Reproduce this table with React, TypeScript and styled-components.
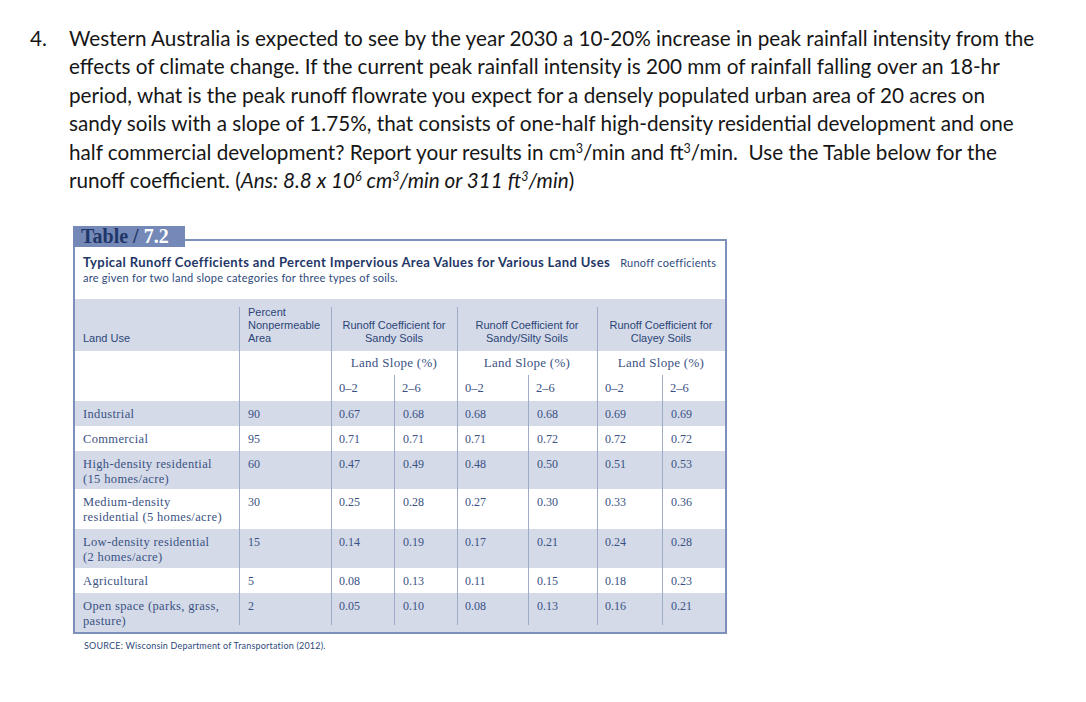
import styled, { createGlobalStyle } from "styled-components";

const GlobalStyle = createGlobalStyle`
  html, body {
    margin: 0;
    padding: 0;
    background: #ffffff;
  }
  body {
    width: 1086px;
    height: 702px;
    overflow: hidden;
  }
`;

const Page = styled.div`
  padding: 24px 0 0 30px;
`;

const Question = styled.div`
  display: flex;
  font-family: Lato, "Liberation Sans", sans-serif;
  font-size: 20.7px;
  line-height: 28.4px;
  color: #161616;

  sup {
    font-size: 12.5px;
    line-height: 0;
    vertical-align: 7px;
  }
`;

const Num = styled.div`
  width: 39px;
  flex: none;
`;

const Line = styled.div`
  white-space: pre;
`;

const Frame = styled.div`
  position: relative;
  width: 654px;
  box-sizing: border-box;
  margin: 45px 0 0 43px;
  border: 2px solid #7d8fbb;
  background: #ffffff;
`;

const Tab = styled.div`
  position: absolute;
  top: -15px;
  left: -2px;
  width: 112px;
  height: 21px;
  box-sizing: border-box;
  padding-left: 8px;
  background: #7489b7;
  font-family: "Liberation Serif", serif;
  font-weight: 700;
  font-size: 20px;
  line-height: 21px;
  color: #1f3668;

  span {
    color: #ffffff;
  }
`;

const Caption = styled.div`
  padding: 14px 0 14px 8px;
  font-family: Lato, "Liberation Sans", sans-serif;
  font-size: 11px;
  color: #1f3666;
`;

const CaptionLine = styled.div`
  height: 15px;
  line-height: 15px;
  white-space: nowrap;
`;

const CaptionTitle = styled.span`
  font-weight: 700;
  font-size: 13px;
  letter-spacing: 0.4px;
  margin-right: 10px;
`;

const CaptionNote = styled.span`
  font-size: 11px;
  letter-spacing: 0.25px;
  color: #2e4a7c;
`;

const Grid = styled.table`
  border-collapse: collapse;
  table-layout: fixed;
  width: 650px;
`;

const Row = styled.tr<{ $shade?: boolean; $h: number }>`
  height: ${(p) => p.$h}px;
  background: ${(p) => (p.$shade ? "#d4dae8" : "#ffffff")};
`;

const Cell = styled.td<{ $rule?: boolean; $top?: number; $bottom?: number; $pad?: number }>`
  position: relative;
  padding: 0 0 0 ${(p) => p.$pad ?? 9}px;
  vertical-align: top;
  font-family: "Liberation Serif", serif;
  font-size: 12px;
  line-height: 14.5px;
  color: #3a5283;

  &::before {
    content: "";
    display: ${(p) => (p.$rule ? "block" : "none")};
    position: absolute;
    left: 0;
    top: ${(p) => p.$top ?? 0}px;
    bottom: ${(p) => p.$bottom ?? 0}px;
    border-left: 1px solid #9eabc9;
  }
`;

const BodyCell = styled(Cell)`
  padding-top: 6px;
`;

const UseCell = styled(BodyCell)`
  font-size: 12.5px;
  letter-spacing: 0.35px;
`;

const HeadCell = styled(Cell)<{ $center?: boolean }>`
  vertical-align: bottom;
  padding-bottom: 6px;
  padding-right: 2px;
  text-align: ${(p) => (p.$center ? "center" : "left")};
  font-family: "Liberation Sans", Arial, sans-serif;
  font-size: 11px;
  line-height: 13px;
  color: #2c4577;
`;

const SlopeCell = styled(Cell)`
  vertical-align: middle;
  text-align: center;
  padding-left: 0;
  font-size: 13px;
  letter-spacing: 0.3px;
`;

const RangeCell = styled(Cell)`
  vertical-align: middle;
  font-size: 12.5px;
`;

const Source = styled.div`
  margin: 6px 0 0 54px;
  font-family: Lato, "Liberation Sans", sans-serif;
  font-size: 9px;
  line-height: 12px;
  letter-spacing: 0.2px;
  color: #2e4a7c;
`;

type DataRow = {
  use: string[];
  pct: string;
  values: string[];
  h: number;
  shade: boolean;
};

const rows: DataRow[] = [
  { use: ["Industrial"], pct: "90", values: ["0.67", "0.68", "0.68", "0.68", "0.69", "0.69"], h: 25, shade: true },
  { use: ["Commercial"], pct: "95", values: ["0.71", "0.71", "0.71", "0.72", "0.72", "0.72"], h: 25, shade: false },
  { use: ["High-density residential", "(15 homes/acre)"], pct: "60", values: ["0.47", "0.49", "0.48", "0.50", "0.51", "0.53"], h: 38, shade: true },
  { use: ["Medium-density", "residential (5 homes/acre)"], pct: "30", values: ["0.25", "0.28", "0.27", "0.30", "0.33", "0.36"], h: 40, shade: false },
  { use: ["Low-density residential", "(2 homes/acre)"], pct: "15", values: ["0.14", "0.19", "0.17", "0.21", "0.24", "0.28"], h: 39, shade: true },
  { use: ["Agricultural"], pct: "5", values: ["0.08", "0.13", "0.11", "0.15", "0.18", "0.23"], h: 25, shade: false },
  { use: ["Open space (parks, grass,", "pasture)"], pct: "2", values: ["0.05", "0.10", "0.08", "0.13", "0.16", "0.21"], h: 39, shade: true },
];

const widths = [164, 92, 63, 63, 71, 69, 65, 63];
const groups = ["Sandy Soils", "Sandy/Silty Soils", "Clayey Soils"];

export default function App() {
  return (
    <>
      <GlobalStyle />
      <Page>
        <Question>
          <Num>4.</Num>
          <div>
            <Line>Western Australia is expected to see by the year 2030 a 10-20% increase in peak rainfall intensity from the</Line>
            <Line>effects of climate change. If the current peak rainfall intensity is 200 mm of rainfall falling over an 18-hr</Line>
            <Line>period, what is the peak runoff flowrate you expect for a densely populated urban area of 20 acres on</Line>
            <Line>sandy soils with a slope of 1.75%, that consists of one-half high-density residential development and one</Line>
            <Line>
              half commercial development? Report your results in cm<sup>3</sup>/min and ft<sup>3</sup>/min.  Use the Table below for the
            </Line>
            <Line>
              runoff coefficient. (
              <i>
                Ans: 8.8 x 10<sup>6</sup> cm<sup>3</sup>/min or 311 ft<sup>3</sup>/min
              </i>
              )
            </Line>
          </div>
        </Question>

        <Frame>
          <Tab>
            Table / <span>7.2</span>
          </Tab>
          <Caption>
            <CaptionLine>
              <CaptionTitle>
                Typical Runoff Coefficients and Percent Impervious Area Values for Various Land Uses
              </CaptionTitle>
              <CaptionNote>Runoff coefficients</CaptionNote>
            </CaptionLine>
            <CaptionLine>
              <CaptionNote>are given for two land slope categories for three types of soils.</CaptionNote>
            </CaptionLine>
          </Caption>

          <Grid>
            <colgroup>
              {widths.map((w, i) => (
                <col key={i} style={{ width: w }} />
              ))}
            </colgroup>
            <tbody>
              <Row $shade $h={52}>
                <HeadCell $pad={8}>Land Use</HeadCell>
                <HeadCell $rule $top={8}>
                  Percent
                  <br />
                  Nonpermeable
                  <br />
                  Area
                </HeadCell>
                {groups.map((g) => (
                  <HeadCell key={g} colSpan={2} $center $rule $top={8} $pad={2}>
                    Runoff Coefficient for
                    <br />
                    {g}
                  </HeadCell>
                ))}
              </Row>
              <Row $h={24}>
                <Cell rowSpan={2} />
                <Cell rowSpan={2} $rule />
                {groups.map((g) => (
                  <SlopeCell key={g} colSpan={2} $rule>
                    Land Slope (%)
                  </SlopeCell>
                ))}
              </Row>
              <Row $h={26}>
                {groups.map((g) => [
                  <RangeCell key={g + "a"} $rule $pad={8}>
                    0–2
                  </RangeCell>,
                  <RangeCell key={g + "b"} $rule $pad={8}>
                    2–6
                  </RangeCell>,
                ])}
              </Row>
              {rows.map((r, i) => {
                const last = i === rows.length - 1;
                const bottom = last ? 7 : 0;
                return (
                  <Row key={r.use[0]} $shade={r.shade} $h={r.h}>
                    <UseCell $pad={8}>
                      {r.use.map((u, j) => (
                        <div key={j}>{u}</div>
                      ))}
                    </UseCell>
                    <BodyCell $rule $bottom={bottom}>
                      {r.pct}
                    </BodyCell>
                    {r.values.map((v, j) => (
                      <BodyCell key={j} $rule $bottom={bottom} $pad={j % 2 === 0 ? 8 : 9}>
                        {v}
                      </BodyCell>
                    ))}
                  </Row>
                );
              })}
            </tbody>
          </Grid>
        </Frame>
        <Source>SOURCE: Wisconsin Department of Transportation (2012).</Source>
      </Page>
    </>
  );
}
